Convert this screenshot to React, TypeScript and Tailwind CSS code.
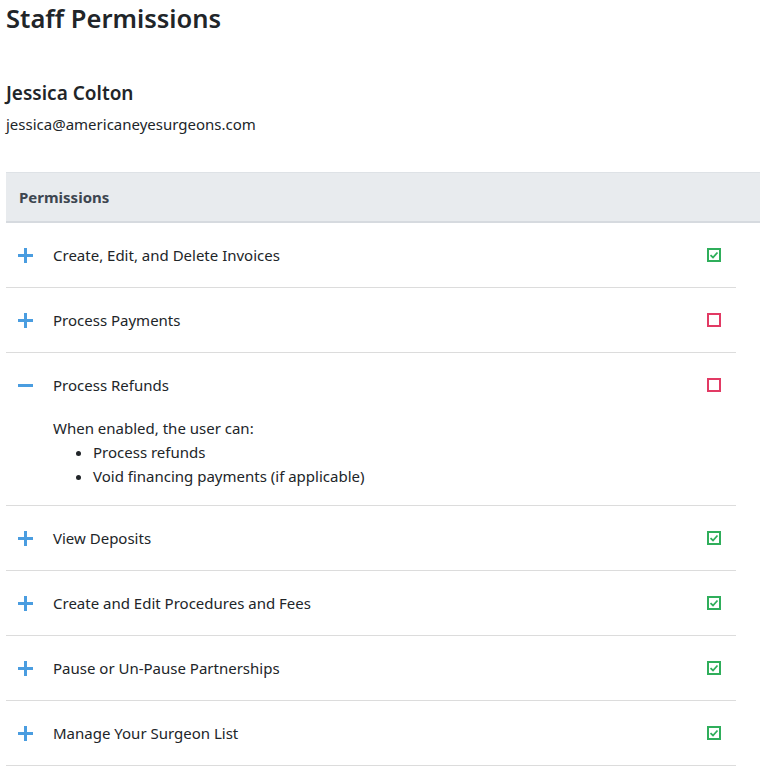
import { useState } from "react";

type Perm = {
  label: string;
  enabled: boolean;
  details?: string[];
};

const PERMS: Perm[] = [
  { label: "Create, Edit, and Delete Invoices", enabled: true },
  { label: "Process Payments", enabled: false },
  {
    label: "Process Refunds",
    enabled: false,
    details: ["Process refunds", "Void financing payments (if applicable)"],
  },
  { label: "View Deposits", enabled: true },
  { label: "Create and Edit Procedures and Fees", enabled: true },
  { label: "Pause or Un-Pause Partnerships", enabled: true },
  { label: "Manage Your Surgeon List", enabled: true },
];

function Toggle({ open }: { open: boolean }) {
  return (
    <svg width="15" height="15" viewBox="0 0 15 15" className="shrink-0">
      <rect x="0" y="6" width="15" height="3" fill="#4a9de0" />
      {!open && <rect x="6" y="0" width="3" height="15" fill="#4a9de0" />}
    </svg>
  );
}

function Check({ on }: { on: boolean }) {
  return (
    <span
      className={
        on
          ? "flex h-[14px] w-[14px] items-center justify-center border-2 border-[#2fae5b]"
          : "flex h-[14px] w-[14px] items-center justify-center border-2 border-[#e23a64]"
      }
    >
      {on && (
        <svg width="10" height="10" viewBox="0 0 10 10">
          <path d="M1.5 5.2 L4 7.5 L8.5 2.5" fill="none" stroke="#2fae5b" strokeWidth="1.8" />
        </svg>
      )}
    </span>
  );
}

export default function App() {
  const [open, setOpen] = useState<number | null>(2);

  return (
    <div className="min-h-screen bg-white pl-[6px] pr-3 text-[#212529] [font-family:'Noto_Sans',sans-serif]">
      <h1 className="pt-[1px] text-[25.5px] font-semibold leading-[34px]">Staff Permissions</h1>

      <div className="mt-[45px] text-[19px] font-semibold leading-[26px]">Jessica Colton</div>
      <div className="mt-[8px] text-[15px] leading-[20px]">jessica@americaneyesurgeons.com</div>

      <div className="mt-[38px] flex h-[51px] items-center border-t border-b-2 border-t-[#dee2e6] border-b-[#d6dadf] bg-[#e8ebee] px-[13px] text-[15px] font-bold text-[#3d4650]">
        Permissions
      </div>

      <div className="w-[730px]">
        {PERMS.map((p, i) => {
          const isOpen = open === i;
          return (
            <div key={p.label} className="border-b border-[#dcdcdc]">
              <button
                type="button"
                onClick={() => setOpen(isOpen ? null : i)}
                className="flex h-[64px] w-full items-center pl-[12px] pr-[15px] text-left"
              >
                <Toggle open={isOpen} />
                <span className="ml-[20px] flex-1 text-[15px]">{p.label}</span>
                <Check on={p.enabled} />
              </button>
              {isOpen && p.details && (
                <div className="-mt-[1px] pb-[17px] pl-[47px] text-[15px] leading-[24px]">
                  <p>When enabled, the user can:</p>
                  <ul className="list-disc pl-[40px]">
                    {p.details.map((d) => (
                      <li key={d}>{d}</li>
                    ))}
                  </ul>
                </div>
              )}
            </div>
          );
        })}
      </div>
    </div>
  );
}
